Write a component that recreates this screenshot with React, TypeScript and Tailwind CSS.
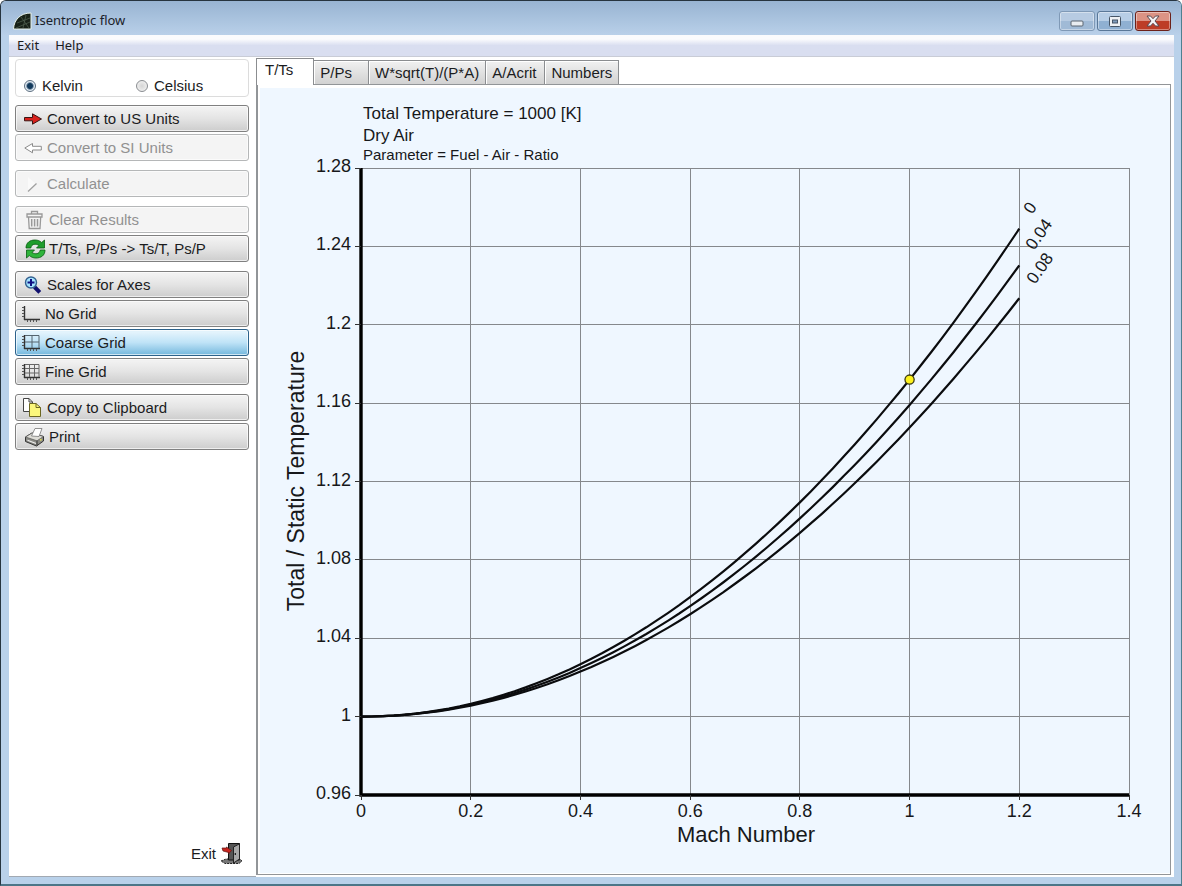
import { useState } from 'react';
import type { ReactNode } from 'react';
import clsx from 'clsx';

const RedArrow = () => (
  <path
    d="M0.5 7.5H8.5V3.8L17.5 9L8.5 14.2V10.8H0.5Z"
    fill="#d8201c"
    stroke="#3a1512"
  />
);

const BackArrow = () => (
  <path
    d="M0.8 9L8.5 4.5V7.3H17.3V11H8.5V13.8Z"
    fill="#fff"
    stroke="#8b8b8b"
  />
);

const Play = () => (
  <>
    <path d="M4 2L12 9L4 16Z" fill="#fafafa" />
    <path d="M12.5 8.5L4 16.5" stroke="#a0a0a0" strokeWidth="1.3" />
  </>
);

const Trash = () => (
  <g fill="none" stroke="#999" strokeWidth="1.3">
    <path d="M5.5 3V0.5H11.5V3M1 6V3H16V6ZM2.5 6L3.2 17.5H14L14.7 6" />
    <path d="M5.7 8V15.5M8.6 8V15.5M11.5 8V15.5" strokeWidth="1.5" />
  </g>
);

const Refresh = () => (
  <g stroke="#075c12" strokeWidth="0.8" strokeLinejoin="round">
    <path
      d="M0 8C0 2.5 4 0 9 0C12 0 14 1 15.7 2.5L18.5 0V8H10.5L13 5.5C9.5 3.2 5.5 4 4.8 8Z"
      fill="#1f9d2c"
    />
    <path
      d="M19 10C19 15.5 15 18 10 18C7 18 5 17 3.3 15.5L0.5 18V10H8.5L6 12.5C9.5 14.8 13.5 14 14.2 10Z"
      fill="#2fb43b"
    />
  </g>
);

const Magnifier = () => (
  <>
    <path d="M10.5 11L15.8 16.3" stroke="#10106e" strokeWidth="4" />
    <circle cx="7" cy="6.5" r="5.5" fill="#a5e4ff" stroke="#33608f" strokeWidth="1.4" />
    <path d="M7 3V10M3.5 6.5H10.5" stroke="#101083" strokeWidth="2" />
  </>
);

const AxisTicks = () => (
  <>
    <path d="M2.5 1V15M2 14.5H18" stroke="#333" strokeWidth="1.4" />
    <path
      d="M0 2.5H2M0 5.5H2M0 8.5H2M0 11.5H2M5.5 15V17M8.5 15V17M11.5 15V17M14.5 15V17"
      stroke="#555"
    />
  </>
);

const CoarseGridIcon = () => (
  <>
    <AxisTicks />
    <path d="M3 1.5H17V14M3 8H17M10 1V14" fill="none" stroke="#55646e" />
  </>
);

const FineGridIcon = () => (
  <>
    <AxisTicks />
    <path
      d="M3 1.5H17V14M3 5.5H17M3 10H17M7.5 1V14M12.5 1V14"
      fill="none"
      stroke="#666"
    />
  </>
);

const CopyPages = () => (
  <>
    <path d="M-0.5 -0.5H5L8.5 3V12.5H-0.5Z" fill="#fff" stroke="#444" />
    <path d="M5 -0.5V3H8.5" fill="none" stroke="#444" />
    <path d="M5.5 4.5H12L16.5 8.5V17.5H5.5Z" fill="#fbf77c" stroke="#6c6722" />
    <path d="M12 4.5V8.5H16.5" fill="none" stroke="#6c6722" />
  </>
);

const Printer = () => (
  <>
    <path d="M-0.5 9L6 5L17.5 8.5V13L10.5 18L-0.5 13.5Z" fill="#8b8b86" stroke="#333" />
    <path d="M-0.5 9L6 5L17.5 8.5L11 12.8Z" fill="#dddcd6" stroke="#555" strokeWidth="0.7" />
    <path d="M5.5 8L9 0.5H16L13 8.5Z" fill="#fff" stroke="#777" strokeWidth="0.8" />
    <path d="M1.5 12.2L10 15.5" stroke="#eee" strokeWidth="1.2" />
    <path d="M11 12.8V17.5" stroke="#333" />
    <circle cx="14.8" cy="11.8" r="1" fill="#d9d65b" />
  </>
);

type Action = {
  label: string;
  icon: () => ReactNode;
  indent: string;
  disabled?: boolean;
  grid?: Grid;
};

type Grid = 'none' | 'coarse' | 'fine';

const groups: Action[][] = [
  [
    { label: 'Convert to US Units', icon: RedArrow, indent: 'pl-2' },
    { label: 'Convert to SI Units', icon: BackArrow, indent: 'pl-2', disabled: true },
  ],
  [{ label: 'Calculate', icon: Play, indent: 'pl-2', disabled: true }],
  [
    { label: 'Clear Results', icon: Trash, indent: 'pl-2.5', disabled: true },
    { label: 'T/Ts, P/Ps -> Ts/T, Ps/P', icon: Refresh, indent: 'pl-2.5' },
  ],
  [
    { label: 'Scales for Axes', icon: Magnifier, indent: 'pl-2' },
    { label: 'No Grid', icon: AxisTicks, indent: 'pl-1.5', grid: 'none' },
    { label: 'Coarse Grid', icon: CoarseGridIcon, indent: 'pl-1.5', grid: 'coarse' },
    { label: 'Fine Grid', icon: FineGridIcon, indent: 'pl-1.5', grid: 'fine' },
  ],
  [
    { label: 'Copy to Clipboard', icon: CopyPages, indent: 'pl-2' },
    { label: 'Print', icon: Printer, indent: 'pl-2.5' },
  ],
];

const tabs = [
  { label: 'T/Ts', pad: 'pl-2 pr-5' },
  { label: 'P/Ps', pad: 'pl-1.5 pr-4' },
  { label: 'W*sqrt(T)/(P*A)', pad: 'px-1.5' },
  { label: 'A/Acrit', pad: 'pl-1.5 pr-2' },
  { label: 'Numbers', pad: 'px-1.5' },
];

function TitleBar() {
  const control =
    'flex h-5 w-9 items-center justify-center rounded-[3px] border shadow-[inset_0_0_0_1px_rgba(255,255,255,0.4)]';

  return (
    <header className="flex h-[34px] shrink-0 items-center bg-linear-to-b from-[#98b4d2] to-[#b9d0e9] pr-[10px] pl-3">
      <svg viewBox="0 0 20 18" className="mt-[6px] h-[18px] w-5" aria-hidden="true">
        <path d="M0.5 17C1 8 7 1 18 1V17Z" fill="#172117" stroke="#e8f3ea" />
        <path
          d="M3 16L17 10M4 11L17 6M8 5L16 16M13 3L10 16"
          stroke="#4b5c4b"
          strokeWidth="0.8"
        />
      </svg>
      <h1 className="mt-[6px] ml-[2px] font-['Noto_Sans',sans-serif] text-[13px] text-[#1b222b]">
        Isentropic flow
      </h1>
      <div className="ml-auto flex gap-[2px] pt-[6px]">
        <button
          aria-label="Minimize"
          className={clsx(
            control,
            'border-[#7f99b6] bg-linear-to-b from-[#b7cbe2] from-50% to-[#a0bad6] to-50%',
          )}
        >
          <svg viewBox="0 0 14 10" className="mt-1 h-[10px] w-[14px]" aria-hidden="true">
            <rect x="1" y="3" width="12" height="5" rx="1" fill="#e9edf1" stroke="#5b6570" />
          </svg>
        </button>
        <button
          aria-label="Maximize"
          className={clsx(
            control,
            'border-[#5a7898] bg-linear-to-b from-[#b7cee6] from-50% to-[#8fb0d2] to-50%',
          )}
        >
          <svg viewBox="0 0 12 11" className="h-[11px] w-3" aria-hidden="true">
            <rect x="0.5" y="0.5" width="11" height="10" rx="1" fill="#eef1f4" stroke="#465566" />
            <rect x="3.5" y="4" width="5" height="3" fill="#7f9cbc" stroke="#465566" />
          </svg>
        </button>
        <button
          aria-label="Close"
          className={clsx(
            control,
            'border-[#6c2119] bg-linear-to-b from-[#dc9384] from-50% to-[#bd3d26] to-50%',
          )}
        >
          <svg viewBox="0 0 14 12" className="h-3 w-[14px]" aria-hidden="true">
            <path
              d="M1 1H4.5L7 3.7L9.5 1H13L9 6L13 11H9.5L7 8.3L4.5 11H1L5 6Z"
              fill="#f4f4f5"
              stroke="#5b4a52"
            />
          </svg>
        </button>
      </div>
    </header>
  );
}

function UnitChoice() {
  const radio =
    'size-3 appearance-none rounded-full border border-[#8a8d91] bg-radial from-[#d5d5d5] to-[#f8f8f8] checked:border-[#5d6f80] checked:bg-radial checked:from-[#123a5c] checked:from-35% checked:to-[#e4edf5] checked:to-60%';

  return (
    <fieldset className="flex rounded-[4px] border border-[#dcdcdc] px-2 pt-4">
      <label className="flex w-28 items-center gap-[6px]">
        <input type="radio" name="unit" value="K" defaultChecked className={radio} />
        Kelvin
      </label>
      <label className="flex items-center gap-[6px]">
        <input type="radio" name="unit" value="C" className={radio} />
        Celsius
      </label>
    </fieldset>
  );
}

type SidebarProps = {
  grid: Grid;
  onGrid: (grid: Grid) => void;
};

function Sidebar({ grid, onGrid }: SidebarProps) {
  return (
    <aside className="flex w-[247px] shrink-0 flex-col border-b border-[#a2a9b2] bg-white pt-[2px] pr-[7px] pb-3 pl-[6px] text-[15px] leading-5">
      <UnitChoice />
      <div className="mt-2 flex flex-col gap-[9px]">
        {groups.map((group) => (
          <div key={group[0].label} className="flex flex-col gap-[2px]">
            {group.map(({ label, icon: Icon, indent, disabled, grid: value }) => (
              <button
                key={label}
                disabled={disabled}
                onClick={() => value && onGrid(value)}
                className={clsx(
                  'flex h-[27px] items-center gap-[5px] rounded-[3px] border text-left whitespace-nowrap shadow-[inset_0_0_0_1px_rgba(255,255,255,0.65)]',
                  indent,
                  disabled && 'border-[#b5b7b8] bg-[#f4f4f4] text-[#919191]',
                  !disabled &&
                    (!value || value !== grid) &&
                    'border-[#808080] bg-linear-to-b from-[#f1f1f1] from-10% via-[#e4e4e4] via-50% to-[#cdcdcd]',
                  value &&
                    value === grid &&
                    'border-[#2c628b] bg-linear-to-b from-[#e2f3fc] from-10% via-[#bfe3f7] via-50% to-[#74b8dd]',
                )}
              >
                <svg
                  viewBox="0 0 18 18"
                  className="size-[18px] shrink-0 overflow-visible"
                  fill="none"
                  aria-hidden="true"
                >
                  <Icon />
                </svg>
                {label}
              </button>
            ))}
          </div>
        ))}
      </div>
      <button className="mt-auto mr-[7px] flex items-center gap-[5px] self-end">
        Exit
        <svg viewBox="0 0 21 21" className="size-[21px]" aria-hidden="true">
          <path d="M0 18L5 16H19L21 18L18 20.5H4Z" fill="#777" stroke="#222" strokeDasharray="2 1" />
          <path d="M7.5 0.5H18.5V17H7.5Z" fill="#555" stroke="#111" />
          <path d="M12.5 4L18.5 0.8V16L12.5 20Z" fill="#a7a7a7" stroke="#222" />
          <path d="M14.3 10V12" stroke="#111" strokeWidth="1.2" />
          <path d="M1 5L5.5 5V4L10.5 7.5L7.5 11V9.5L2 8Z" fill="#c7251f" stroke="#5c1512" strokeWidth="0.7" />
        </svg>
      </button>
    </aside>
  );
}

// plot area inside the 910 x 785 drawing
const LEFT = 101;
const RIGHT = 869;
const TOP = 80;
const BOTTOM = 707;

const toX = (mach: number) => LEFT + (mach / 1.4) * (RIGHT - LEFT);
const toY = (ratio: number) => BOTTOM - ((ratio - 0.96) / 0.32) * (BOTTOM - TOP);

const xTicks = [0, 0.2, 0.4, 0.6, 0.8, 1, 1.2, 1.4];
const yTicks = [0.96, 1, 1.04, 1.08, 1.12, 1.16, 1.2, 1.24, 1.28];

const curves = [
  { label: '0', k: 0.172, x: 772, y: 127 },
  { label: '0.04', k: 0.1591, x: 774, y: 163 },
  { label: '0.08', k: 0.1475, x: 775, y: 197 },
];

const ratioAt = (k: number, mach: number) => 1 + k * Math.pow(mach, 2.03);

function curvePoints(k: number) {
  return Array.from({ length: 61 }, (_, i) => {
    const mach = i * 0.02;
    return `${toX(mach).toFixed(1)},${toY(ratioAt(k, mach)).toFixed(1)}`;
  }).join(' ');
}

function Chart({ grid }: { grid: Grid }) {
  const fineX = grid === 'fine' ? xTicks.slice(1).map((x) => x - 0.1) : [];
  const fineY = grid === 'fine' ? yTicks.slice(1).map((y) => y - 0.02) : [];

  return (
    <svg
      viewBox="0 0 910 785"
      className="block h-full w-full bg-[#eff7ff] font-['Liberation_Sans',Arial,sans-serif]"
      fill="#17181a"
      role="img"
      aria-label="Total / Static Temperature"
    >
      {grid !== 'none' && (
        <g stroke="#85888c" strokeWidth="1" shapeRendering="crispEdges">
          {[...xTicks.slice(1), ...fineX].map((x) => (
            <line key={x} x1={toX(x)} x2={toX(x)} y1={TOP} y2={BOTTOM} />
          ))}
          {[...yTicks.slice(1), ...fineY].map((y) => (
            <line key={y} x1={LEFT} x2={RIGHT} y1={toY(y)} y2={toY(y)} />
          ))}
        </g>
      )}

      <path
        d={`M${LEFT} ${TOP}V${BOTTOM}H${RIGHT}`}
        fill="none"
        stroke="#000"
        strokeWidth="3.4"
      />
      <g stroke="#333" shapeRendering="crispEdges">
        {xTicks.map((x) => (
          <line key={x} x1={toX(x)} x2={toX(x)} y1={BOTTOM} y2={BOTTOM + 5} />
        ))}
        {yTicks.map((y) => (
          <line key={y} x1={LEFT - 6} x2={LEFT} y1={toY(y)} y2={toY(y)} />
        ))}
      </g>

      <g fontSize="18">
        {xTicks.map((x) => (
          <text key={x} x={toX(x)} y={BOTTOM + 22} textAnchor="middle">
            {x}
          </text>
        ))}
        {yTicks.map((y) => (
          <text key={y} x={LEFT - 10} y={toY(y) + 4} textAnchor="end">
            {y}
          </text>
        ))}
      </g>

      {curves.map(({ label, k, x, y }) => (
        <g key={label}>
          <polyline points={curvePoints(k)} fill="none" stroke="#0b0c0e" strokeWidth="2.2" />
          <text transform={`translate(${x} ${y}) rotate(-55)`} fontSize="17">
            {label}
          </text>
        </g>
      ))}
      <circle
        cx={toX(1)}
        cy={toY(ratioAt(0.172, 1))}
        r="4.6"
        fill="#fdf11c"
        stroke="#3b3a10"
        strokeWidth="1.3"
      />

      <text x="103" y="31" fontSize="17">
        Total Temperature = 1000 [K]
      </text>
      <text x="103" y="53" fontSize="17">
        Dry Air
      </text>
      <text x="103" y="72" fontSize="15">
        Parameter = Fuel - Air - Ratio
      </text>
      <text x="486" y="754" fontSize="22" textAnchor="middle">
        Mach Number
      </text>
      <text transform="translate(44 393) rotate(-90)" fontSize="23" textAnchor="middle">
        Total / Static Temperature
      </text>
    </svg>
  );
}

export default function App() {
  const [grid, setGrid] = useState<Grid>('coarse');
  const [tab, setTab] = useState('T/Ts');

  return (
    <div className="flex h-screen min-h-[600px] flex-col overflow-hidden rounded-t-md border border-b-2 border-[#26343f] border-r-[#4f8090] border-b-[#4d7688] bg-[#b9d1ea] font-['Liberation_Sans',Arial,sans-serif] text-[#1b1c1e]">
      <TitleBar />
      <div className="mr-[7px] mb-[7px] ml-2 flex min-h-0 flex-1 flex-col bg-white">
        <nav className="flex h-[22px] shrink-0 items-center gap-4 border-b border-[#c9ccd6] bg-linear-to-b from-[#fafbfd] from-20% to-[#d9def0] to-50% px-2 font-['Noto_Sans',sans-serif] text-[13px]">
          <a href="#exit">Exit</a>
          <a href="#help">Help</a>
        </nav>
        <div className="flex min-h-0 flex-1">
          <Sidebar grid={grid} onGrid={setGrid} />
          <main className="flex min-w-0 flex-1 flex-col pt-px pr-[3px] pb-[2px]">
            <div role="tablist" className="flex h-[26px] shrink-0 items-end text-[15px] leading-5">
              {tabs.map(({ label, pad }) => (
                <button
                  key={label}
                  role="tab"
                  aria-selected={tab === label}
                  onClick={() => setTab(label)}
                  className={clsx(
                    'border-t border-r border-[#8b8d90] whitespace-nowrap',
                    pad,
                    tab === label
                      ? 'relative -mb-px h-[27px] border-l bg-white pb-1'
                      : 'h-6 bg-linear-to-b from-[#f1f1f1] to-[#d2d2d2] shadow-[inset_1px_1px_0_#fff]',
                  )}
                >
                  {label}
                </button>
              ))}
            </div>
            <div className="min-h-0 flex-1 border border-l-2 border-[#929598] bg-white pt-[3px] pb-px pl-[2px]">
              <Chart grid={grid} />
            </div>
          </main>
        </div>
      </div>
    </div>
  );
}
